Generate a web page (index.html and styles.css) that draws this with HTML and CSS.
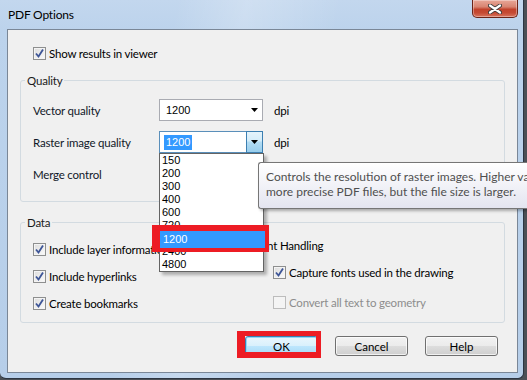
FILE: index.html
```html
<!DOCTYPE html>
<html lang="en">
<head>
    <meta charset="UTF-8">
    <title>PDF Options</title>
    <link rel="stylesheet" href="styles.css">
</head>
<body>
    <div class="window">
        <div class="titlebar">
            <span class="title">PDF Options</span>
            <span class="close" title="Close">
                <svg width="14" height="10" viewBox="0 0 14 10">
                    <path d="M2 1.5 L12 8.5 M12 1.5 L2 8.5" stroke="#3b3b3b" stroke-width="4" stroke-linecap="round"/>
                    <path d="M2 1.5 L12 8.5 M12 1.5 L2 8.5" stroke="#fff" stroke-width="2.2" stroke-linecap="round"/>
                </svg>
            </span>
        </div>
        <div class="client">
            <div class="check-row top-row">
                <span class="box checked"><svg width="11" height="11" viewBox="0 0 11 11"><polyline points="2,5.5 4.5,8.5 9,1.5" fill="none" stroke="#3d5597" stroke-width="1.8"/></svg></span>
                Show results in viewer
            </div>

            <fieldset class="group">
                <legend>Quality</legend>
                <div class="quality-body">
                    <div class="field-row">
                        <span class="field-label">Vector quality</span>
                        <div class="combo">
                            <span class="combo-value">1200</span>
                            <span class="combo-arrow"><svg width="7" height="4" viewBox="0 0 7 4"><path d="M0 0 H7 L3.5 4 Z" fill="#000"/></svg></span>
                        </div>
                        <span class="unit">dpi</span>
                    </div>
                    <div class="field-row">
                        <span class="field-label">Raster image quality</span>
                        <div class="combo focused">
                            <span class="combo-value"><span class="selected">1200</span></span>
                            <span class="combo-arrow hot"><svg width="7" height="4" viewBox="0 0 7 4"><path d="M0 0 H7 L3.5 4 Z" fill="#000"/></svg></span>
                            <ul class="dropdown">
                                <li>150</li>
                                <li>200</li>
                                <li>300</li>
                                <li>400</li>
                                <li>600</li>
                                <li>720</li>
                                <li>1200</li>
                                <li>2400</li>
                                <li>4800</li>
                                <li class="pick">1200</li>
                            </ul>
                        </div>
                        <span class="unit">dpi</span>
                    </div>
                    <div class="field-row">
                        <span class="field-label">Merge control</span>
                    </div>
                </div>
            </fieldset>

            <fieldset class="group">
                <legend>Data</legend>
                <div class="data-body">
                    <div class="col-left">
                        <div class="check-row">
                            <span class="box checked"><svg width="11" height="11" viewBox="0 0 11 11"><polyline points="2,5.5 4.5,8.5 9,1.5" fill="none" stroke="#3d5597" stroke-width="1.8"/></svg></span>
                            Include layer information
                        </div>
                        <div class="check-row">
                            <span class="box checked"><svg width="11" height="11" viewBox="0 0 11 11"><polyline points="2,5.5 4.5,8.5 9,1.5" fill="none" stroke="#3d5597" stroke-width="1.8"/></svg></span>
                            Include hyperlinks
                        </div>
                        <div class="check-row">
                            <span class="box checked"><svg width="11" height="11" viewBox="0 0 11 11"><polyline points="2,5.5 4.5,8.5 9,1.5" fill="none" stroke="#3d5597" stroke-width="1.8"/></svg></span>
                            Create bookmarks
                        </div>
                    </div>
                    <div class="col-right">
                        <div class="subhead">Font Handling</div>
                        <div class="check-row capture">
                            <span class="box checked"><svg width="11" height="11" viewBox="0 0 11 11"><polyline points="2,5.5 4.5,8.5 9,1.5" fill="none" stroke="#3d5597" stroke-width="1.8"/></svg></span>
                            Capture fonts used in the drawing
                        </div>
                        <div class="check-row convert disabled">
                            <span class="box"></span>
                            Convert all text to geometry
                        </div>
                    </div>
                </div>
            </fieldset>

            <div class="buttons">
                <span class="btn-wrap">
                    <button class="btn default">OK</button>
                    <span class="mark"></span>
                </span>
                <button class="btn">Cancel</button>
                <button class="btn">Help</button>
            </div>
        </div>
    </div>

    <div class="tooltip">
        Controls the resolution of raster images. Higher values produce<br>
        more precise PDF files, but the file size is larger.
    </div>
</body>
</html>
```

FILE: styles.css
```css
html {
    overflow: hidden;
}
body {
    margin: 0;
    background: #4b5056;
    font-family: Lato, "Liberation Sans", sans-serif;
    font-size: 11.5px;
    letter-spacing: -0.2px;
    color: #000;
}
.window {
    width: 524px;
    height: 379px;
    box-sizing: border-box;
    padding: 0 5px 5px 7px;
    display: flex;
    flex-direction: column;
    border-right: 1px solid #2c3542;
    border-bottom: 1px solid #2c3542;
    border-radius: 0 0 6px 6px;
    background:
        linear-gradient(100deg, rgba(255,255,255,0) 30%, rgba(255,255,255,0.22) 42%, rgba(255,255,255,0) 58%),
        linear-gradient(180deg, #c3d7ee 0, #bcd3ec 30px, #b6cee9 100%);
}
.titlebar {
    height: 29px;
    display: flex;
    justify-content: space-between;
    align-items: flex-start;
}
.title {
    margin: 7px 0 0 1px;
    line-height: 15px;
    font-size: 12px;
}
.close {
    width: 46px;
    height: 18px;
    box-sizing: border-box;
    border: 1px solid #6b2418;
    border-top: none;
    border-radius: 0 0 5px 5px;
    background: linear-gradient(180deg, #e8a797 0, #d88572 40%, #c2432c 55%, #c54a33 75%, #d8745e 100%);
    box-shadow: inset 0 0 0 1px rgba(255,255,255,0.35);
    display: flex;
    align-items: center;
    justify-content: center;
}
.client {
    flex: 1;
    border: 1px solid #7a8797;
    background: #f0f0f0;
    padding: 17px 12px 0;
    display: flex;
    flex-direction: column;
}

/* checkboxes */
.check-row {
    display: flex;
    align-items: center;
    height: 13px;
    line-height: 13px;
    white-space: nowrap;
}
.top-row {
    margin-left: 13px;
}
.box {
    width: 13px;
    height: 13px;
    box-sizing: border-box;
    margin-right: 3px;
    border: 1px solid #8e8f8f;
    background: linear-gradient(135deg, #dcdcdc, #fbfbfb);
    box-shadow: inset 0 0 0 1px #f4f4f4;
    display: flex;
    flex: none;
}
.box svg {
    display: block;
}
.disabled {
    color: #8d8d8d;
}
.disabled .box {
    border-color: #bcbcbc;
    background: #f4f4f4;
    box-shadow: none;
}

/* group boxes */
.group {
    margin: 13px 0 0;
    padding: 0;
    border: 1px solid #d3dbe1;
    border-radius: 3px;
    min-width: 0;
}
.group legend {
    margin-left: 4px;
    padding: 0 2px;
    line-height: 15px;
    color: #1b1b1b;
}
.quality-body {
    padding: 11px 0 16px 12px;
    display: flex;
    flex-direction: column;
    gap: 10px;
}
.field-row {
    display: flex;
    align-items: center;
    height: 22px;
}
.field-label {
    width: 126px;
    color: #101828;
}
.combo {
    width: 104px;
    height: 22px;
    box-sizing: border-box;
    border: 1px solid #a9abb2;
    background: #fff;
    display: flex;
    position: relative;
    letter-spacing: 0;
}
.combo.focused {
    border-color: #5a8fba;
}
.combo-value {
    flex: 1;
    padding-left: 6px;
    line-height: 20px;
    font-family: "Liberation Sans", sans-serif;
    font-size: 11px;
}
.focused .combo-value {
    padding-left: 4px;
}
.selected {
    display: inline-block;
    padding: 0 2px;
    line-height: 15px;
    background: #3399ff;
    color: #fff;
}
.combo-arrow {
    width: 15px;
    display: flex;
    align-items: center;
    justify-content: center;
}
.combo-arrow.hot {
    width: 15px;
    margin: -1px -1px -1px 0;
    border: 1px solid #3c7fb1;
    background: linear-gradient(180deg, #e4f3fb 0, #d3ecf9 45%, #b3dcf3 50%, #98cdec 100%);
}
.unit {
    margin-left: 11px;
}

/* open list */
.dropdown {
    position: absolute;
    top: 21px;
    left: -1px;
    width: 105px;
    box-sizing: border-box;
    margin: 0;
    padding: 0;
    list-style: none;
    border: 1px solid #646464;
    background: #fff;
    box-shadow: 3px 3px 3px rgba(0,0,0,0.28);
    font-family: "Liberation Sans", sans-serif;
    font-size: 11px;
    z-index: 10;
}
.dropdown li {
    height: 13px;
    line-height: 13px;
    padding-left: 2px;
}
.dropdown li.pick {
    position: absolute;
    left: -8px;
    top: 71px;
    width: 117px;
    height: 27px;
    box-sizing: border-box;
    border-style: solid;
    border-color: #ed1c24;
    border-width: 6px 4px 4px 8px;
    background: #3399ff;
    color: #fff;
    padding-left: 3px;
    line-height: 17px;
}

/* data group */
.data-body {
    display: flex;
    padding: 0 0 12px 12px;
}
.col-left {
    width: 240px;
    display: flex;
    flex-direction: column;
    gap: 14px;
    padding-top: 13px;
}
.col-right {
    display: flex;
    flex-direction: column;
    padding-top: 8px;
}
.subhead {
    line-height: 15px;
    margin-left: -18px;
}
.capture {
    margin-top: 13px;
}
.convert {
    margin-top: 17px;
}

/* buttons */
.buttons {
    display: flex;
    justify-content: flex-end;
    gap: 17px;
    margin: 13px 7px 0 0;
}
.btn-wrap {
    position: relative;
    display: flex;
}
.btn {
    width: 73px;
    height: 20px;
    box-sizing: border-box;
    padding: 0;
    border: 1px solid #707070;
    border-radius: 3px;
    background: linear-gradient(180deg, #f2f2f2 0, #ebebeb 50%, #dddddd 50%, #cfcfcf 100%);
    box-shadow: inset 0 0 0 1px rgba(255,255,255,0.7);
    font: inherit;
    color: #000;
}
.btn.default {
    border-color: #3c7fb1;
    background: linear-gradient(180deg, #eaf6fd 0, #d9f0fc 50%, #bee6fd 50%, #a7d9f5 100%);
    box-shadow: inset 0 0 0 1px #8fd8f8;
}
.mark {
    position: absolute;
    left: -8px;
    top: -5px;
    width: 84px;
    height: 27px;
    box-sizing: border-box;
    border-style: solid;
    border-color: #ed1c24;
    border-width: 5px 5px 6px 8px;
}

/* tooltip, cut off by the right edge of the screen */
.tooltip {
    position: absolute;
    left: 258px;
    top: 162px;
    width: 269px;
    height: 47px;
    box-sizing: border-box;
    overflow: hidden;
    padding: 6px 0 0 7px;
    border: 1px solid #767676;
    border-right: none;
    border-radius: 3px 0 0 3px;
    background: linear-gradient(180deg, #ffffff 0, #e4e5f0 100%);
    box-shadow: 2px 2px 3px rgba(0,0,0,0.3);
    color: #4f4f4f;
    font-size: 12px;
    letter-spacing: 0;
    line-height: 15px;
    white-space: nowrap;
    z-index: 20;
}
```
